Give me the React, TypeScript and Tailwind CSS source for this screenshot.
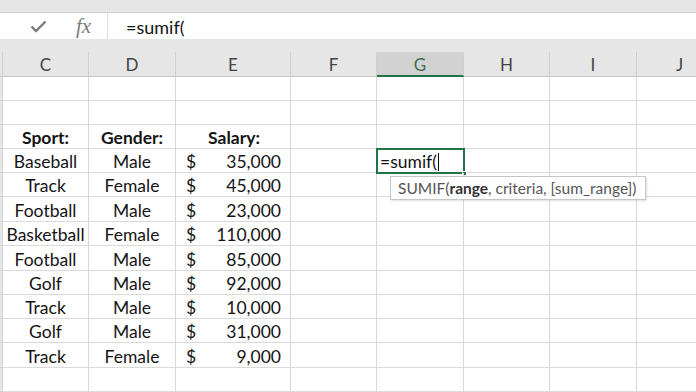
import React from "react";

const cols = [
  { k: "C", w: "w-[86px]" },
  { k: "D", w: "w-[87px]" },
  { k: "E", w: "w-[115px]" },
  { k: "F", w: "w-[86px]" },
  { k: "G", w: "w-[87px]" },
  { k: "H", w: "w-[86px]" },
  { k: "I", w: "w-[87px]" },
  { k: "J", w: "w-[86px]" },
];

type Row = { h: string; sport?: string; gender?: string; salary?: string; header?: boolean; active?: boolean };

const rows: Row[] = [
  { h: "h-[24px]" },
  { h: "h-[24px]" },
  { h: "h-[24px]", header: true },
  { h: "h-[24px]", sport: "Baseball", gender: "Male", salary: "35,000", active: true },
  { h: "h-[24px]", sport: "Track", gender: "Female", salary: "45,000" },
  { h: "h-[25px]", sport: "Football", gender: "Male", salary: "23,000" },
  { h: "h-[24px]", sport: "Basketball", gender: "Female", salary: "110,000" },
  { h: "h-[25px]", sport: "Football", gender: "Male", salary: "85,000" },
  { h: "h-[24px]", sport: "Golf", gender: "Male", salary: "92,000" },
  { h: "h-[24px]", sport: "Track", gender: "Male", salary: "10,000" },
  { h: "h-[24px]", sport: "Golf", gender: "Male", salary: "31,000" },
  { h: "h-[25px]", sport: "Track", gender: "Female", salary: "9,000" },
  { h: "h-[24px]" },
];

function DataRow({ r }: { r: Row }) {
  return (
    <div className={`flex shrink-0 ${r.h}`}>
      <div className="w-[3px] shrink-0 border-r border-[#d4d4d4] border-b bg-[#e6e6e6]" />
      {/* C */}
      <div className="w-[86px] shrink-0 border-r border-b border-[#dadada] flex items-center justify-center pt-[4px] text-[17.5px] text-[#141414]">
        {r.header ? <span className="font-bold">Sport:</span> : r.sport}
      </div>
      {/* D */}
      <div className="w-[87px] shrink-0 border-r border-b border-[#dadada] flex items-center justify-center pt-[4px] text-[17.5px] text-[#141414]">
        {r.header ? <span className="font-bold">Gender:</span> : r.gender}
      </div>
      {/* E */}
      <div className="w-[115px] shrink-0 border-r border-b border-[#dadada] flex items-center pt-[4px] text-[17.5px] text-[#141414]">
        {r.header ? (
          <span className="w-full text-center font-bold pl-[2px]">Salary:</span>
        ) : r.salary ? (
          <div className="flex w-full items-center justify-between pl-[10px] pr-[9px]">
            <span>$</span>
            <span>{r.salary}</span>
          </div>
        ) : null}
      </div>
      {/* F */}
      <div className="w-[86px] shrink-0 border-r border-b border-[#dadada]" />
      {/* G */}
      <div className="relative w-[87px] shrink-0 border-r border-b border-[#dadada] flex items-center pt-[3px] text-[17.5px] text-[#141414]">
        {r.active ? (
          <>
            <span className="pl-[3px]">=sumif(</span>
            <span className="ml-[1px] h-[18px] w-[1px] bg-black" />
            <div className="absolute left-[-1px] top-[-1px] h-[26px] w-[89px] border-2 border-[#217346]" />
            <div className="absolute right-[-4px] bottom-[-4px] h-[5px] w-[5px] bg-[#217346] border border-white" />
          </>
        ) : null}
      </div>
      <div className="w-[86px] shrink-0 border-r border-b border-[#dadada]" />
      <div className="w-[87px] shrink-0 border-r border-b border-[#dadada]" />
      <div className="w-[86px] shrink-0 border-r border-b border-[#dadada]" />
    </div>
  );
}

export default function App() {
  return (
    <div
      className="relative w-[696px] h-[392px] overflow-hidden bg-white flex flex-col"
      style={{ fontFamily: "Lato, 'Noto Sans', sans-serif" }}
    >
      {/* top strip */}
      <div className="h-[13px] shrink-0 bg-[#e6e6e6] border-b border-[#d0d0d0]" />
      {/* formula bar */}
      <div className="h-[26px] shrink-0 flex bg-white">
        <div className="w-[108px] shrink-0 flex items-center border-r border-[#e0e0e0] relative">
          <svg className="absolute left-[30px] top-[7px]" width="17" height="13" viewBox="0 0 17 13">
            <path d="M1.5 6.5 L6 11 L15.5 1.5" fill="none" stroke="#7a7a7a" strokeWidth="2.4" />
          </svg>
          <span
            className="absolute left-[76px] top-[1px] text-[21px] italic text-[#7c7c7c] leading-[24px]"
            style={{ fontFamily: "'Liberation Serif', serif" }}
          >
            fx
          </span>
        </div>
        <div className="flex-1 flex items-center pl-[18px] pt-[2px] text-[18px] text-[#141414]">=sumif(</div>
      </div>
      {/* column headers */}
      <div className="h-[38px] shrink-0 bg-[#e6e6e6] flex flex-col justify-end">
        <div className="flex h-[25px] border-b border-[#c8c8c8]">
          <div className="w-[3px] shrink-0 border-r border-[#cfcfcf]" />
          {cols.map((c) =>
            c.k === "G" ? (
              <div
                key={c.k}
                className={`${c.w} shrink-0 bg-[#d2d2d2] border-b-2 border-[#217346] -mb-[1px] border-r border-r-[#cfcfcf] flex items-center justify-center pt-[2px] text-[17px] text-[#3f6f52]`}
              >
                {c.k}
              </div>
            ) : (
              <div
                key={c.k}
                className={`${c.w} shrink-0 border-r border-[#cfcfcf] flex items-center justify-center pt-[2px] text-[17px] text-[#444]`}
              >
                {c.k}
              </div>
            )
          )}
        </div>
      </div>
      {/* rows */}
      {rows.map((r, i) => (
        <DataRow key={i} r={r} />
      ))}
      {/* tooltip */}
      <div className="absolute left-[390px] top-[176px] h-[24px] w-[256px] bg-white border border-[#c6c6c6] shadow-[1px_1px_2px_rgba(0,0,0,0.12)] flex items-center pl-[7px] pt-[1px] text-[15.5px] text-[#555]">
        SUMIF(<span className="font-bold text-[#333]">range</span>, criteria, [sum_range])
      </div>
    </div>
  );
}
